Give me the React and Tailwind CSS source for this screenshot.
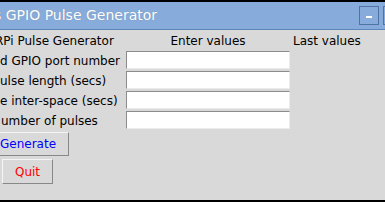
const font = { fontFamily: '"DejaVu Sans", Verdana, sans-serif' };

const rows = [
  { label: 'd GPIO port number', pad: 'pl-0' },
  { label: 'ulse length (secs)', pad: 'pl-0' },
  { label: 'e inter-space (secs)', pad: 'pl-0' },
  { label: 'umber of pulses', pad: 'pl-[1px]' },
];

function Entry() {
  return (
    <div className="h-[18px] w-[164px] border border-t-[#8c8c8c] border-l-[#8c8c8c] border-b-[#ececec] border-r-[#ececec] bg-white" />
  );
}

export default function App() {
  return (
    <div
      className="flex h-[202px] w-[385px] flex-col overflow-hidden border-t-2 border-b-2 border-black bg-[#d9d9d9] text-[12px] text-black"
      style={font}
    >
      {/* title bar */}
      <div className="flex h-[28px] shrink-0 items-center justify-between border-b border-[#5f85b9] bg-[#87acdb]">
        <span className="ml-[-6px] whitespace-nowrap text-[14px] text-white [text-shadow:0_0_1px_#7a8aa0]">
          s GPIO Pulse Generator
        </span>
        <div className="flex items-center gap-[4px] mr-[-18px]">
          <div className="flex h-[19px] w-[20px] items-center justify-center border border-[#4f73a6]">
            <div className="mt-[3px] h-[2px] w-[6px] bg-white" />
          </div>
          <div className="h-[19px] w-[20px] border border-[#4f73a6]" />
        </div>
      </div>

      {/* form */}
      <div className="grid grid-cols-[126px_164px_1fr] whitespace-nowrap">
        <div className="flex h-[21px] items-center overflow-hidden">
          <span className="ml-[-5px]">RPi Pulse Generator</span>
        </div>
        <div className="flex h-[21px] items-center justify-center">Enter values</div>
        <div className="flex h-[21px] items-center pl-[3px]">Last values</div>

        {rows.map((r) => (
          <div key={r.label} className="contents">
            <div className={`flex h-[20px] items-center overflow-hidden ${r.pad}`}>{r.label}</div>
            <div className="h-[20px]">
              <Entry />
            </div>
            <div className="h-[20px]" />
          </div>
        ))}
      </div>

      {/* buttons */}
      <div className="mt-[1px] flex flex-col items-start gap-[3px]">
        <button className="ml-[-13px] flex h-[24px] w-[82px] items-center justify-center border border-t-[#f4f4f4] border-l-[#f4f4f4] border-b-[#888888] border-r-[#888888] text-[#0000ff]">
          Generate
        </button>
        <button className="ml-[2px] flex h-[25px] w-[51px] items-center justify-center border border-t-[#f4f4f4] border-l-[#f4f4f4] border-b-[#888888] border-r-[#888888] text-[#ff0000]">
          Quit
        </button>
      </div>
    </div>
  );
}
